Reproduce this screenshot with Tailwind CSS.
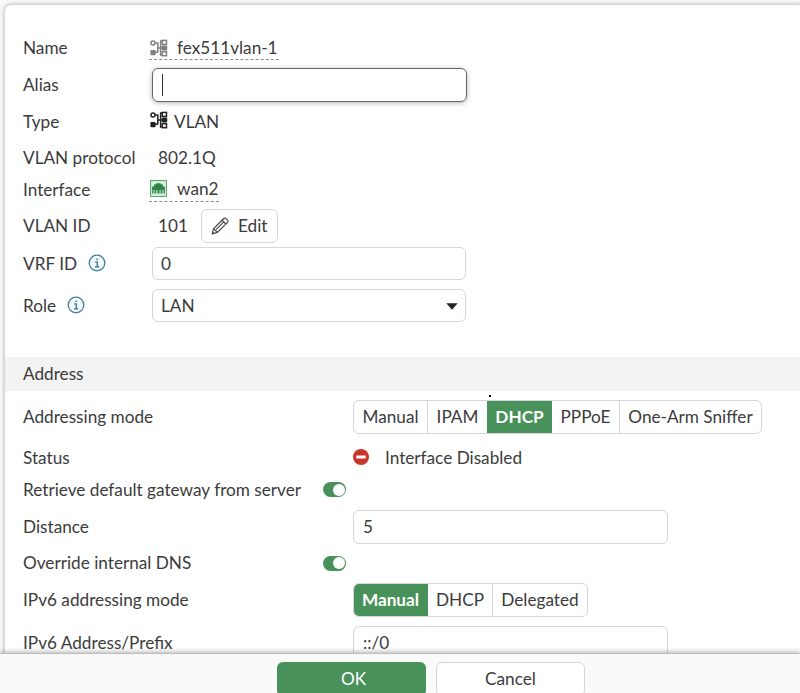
<!DOCTYPE html>
<html lang="en">
<head>
<meta charset="utf-8">
<title>Edit Interface</title>
<script src="https://cdn.jsdelivr.net/npm/@tailwindcss/browser@4"></script>
</head>
<body class="h-[693px] w-[800px] overflow-hidden bg-[#fafafa] font-['Lato',sans-serif] text-[17.2px] leading-6 text-[#3b3b3b]">
<svg class="hidden">
  <symbol id="vlan" viewBox="0 0 18 18">
    <g fill="none" stroke="currentColor" stroke-width="1.5">
      <circle cx="3" cy="4" r="2"/>
      <path d="M5.2 4H7.8V13.2M5 13.2H8M8 9H12M12.5 2H10.6V16H12.5"/>
      <rect x="12.3" y="1.4" width="4.2" height="4"/>
      <rect x="12.3" y="12.7" width="4.2" height="4"/>
    </g>
    <rect x=".4" y="11" width="5.2" height="5.2" rx="1" fill="currentColor"/>
    <rect x="11.8" y="6.6" width="5.4" height="4.8" rx="1" fill="currentColor"/>
  </symbol>
  <symbol id="info" viewBox="0 0 18 18">
    <circle cx="9" cy="9" r="7.8" fill="#f3fafd" stroke="#477f9d" stroke-width="1.3"/>
    <path d="M8.2 5.2H9.8M7.2 8H9.3V12.6M7 12.8H11.2" fill="none" stroke="#477f9d" stroke-width="1.4"/>
  </symbol>
</svg>
<div class="flex h-full flex-col">
  <main class="mt-[5px] ml-[5px] h-[648px] shrink-0 overflow-hidden rounded-tl-md bg-white pt-[25px] shadow-[0_0_4px_1px_rgba(0,0,0,0.25)]">
    <div class="flex h-9 items-center pl-[18px]"><div class="w-[126px]">Name</div>
      <div class="flex h-6 w-[130px] items-center border-b border-dashed border-[#8c8c8c] whitespace-nowrap"><svg class="ml-[1px] size-[18px] text-[#808080]"><use href="#vlan"/></svg><span class="ml-[9px]">fex511vlan-1</span></div></div>
    <div class="flex h-[38px] items-center pl-[18px]"><div class="w-[129px]">Alias</div>
      <div class="flex h-[34px] w-[315px] items-center rounded-md border border-[#666] px-[9px] shadow-[0_1px_5px_rgba(0,0,0,0.3)]"><span class="h-[22px] w-px bg-[#333]"></span></div></div>
    <div class="flex h-9 items-center pl-[18px]"><div class="w-[127px]">Type</div><svg class="-mt-1 size-[18px] text-[#222]"><use href="#vlan"/></svg><span class="ml-[6px]">VLAN</span></div>
    <div class="flex h-[35px] items-center pl-[18px]"><div class="w-[135px]">VLAN protocol</div><span>802.1Q</span></div>
    <div class="flex h-[29px] items-center pl-[18px]"><div class="w-[126px]">Interface</div>
      <div class="flex h-6 w-[70px] items-center border-b border-dashed border-[#8c8c8c]"><svg class="-mt-[2px] ml-[1px] size-[17px]" viewBox="0 0 16 16"><rect x=".5" y=".5" width="15" height="15" fill="#d9eede" stroke="#5cab70"/><path d="M2 12.6V6H4V4H6V3H10V4H12V6H14V12.6H12.7V9.5H11.7V12.6H10V9.5H9V12.6H7V9.5H6V12.6H4.3V9.5H3.3V12.6Z" fill="#2f8547"/></svg><span class="ml-[10px]">wan2</span></div></div>
    <div class="flex h-11 items-center pl-[18px]"><div class="w-[135px]">VLAN ID</div><span class="w-[43px]">101</span>
      <button class="flex h-[34px] w-[77px] items-center rounded-md border border-[#d6d6d6] pl-[9px]"><svg class="size-[18px]" viewBox="0 0 18 18" fill="none" stroke="#444" stroke-width="1.2" stroke-linejoin="round"><path d="M1.2 16.8L2.6 11.6L12.7 1.5Q14 .5 15.3 1.8L16.2 2.7Q17.5 4 16.5 5.3L6.4 15.4ZM2.6 11.6L6.4 15.4M11 3.2L14.8 7M12.3 5.3L5 12.6M1.6 15.2L2.8 16.4"/></svg><span class="ml-[9px]">Edit</span></button></div>
    <div class="flex h-[31px] items-center pl-[18px]"><div class="flex w-[129px] items-center">VRF ID<svg class="-mt-px ml-[11px] size-[18px]"><use href="#info"/></svg></div>
      <div class="flex h-[33px] w-[314px] items-center rounded-md border border-[#d6d6d6] px-2">0</div></div>
    <div class="flex h-[53px] items-center pl-[18px]"><div class="flex w-[129px] items-center">Role<svg class="-mt-[2px] ml-[11px] size-[18px]"><use href="#info"/></svg></div>
      <div class="flex h-[33px] w-[314px] items-center justify-between rounded-md border border-[#d6d6d6] pr-[7px] pl-2">LAN<svg class="mt-[2px] h-[7px] w-3" viewBox="0 0 12 7"><path d="M.3.3H11.7L6 6.8Z" fill="#222"/></svg></div></div>
    <h2 class="mt-[25px] flex h-[34px] items-center bg-[#f3f3f3] pl-[18px]">Address</h2>
    <div class="relative flex h-[51px] items-center pl-[18px]"><span class="absolute top-1 left-[484px] size-[1.5px] bg-black"></span><div class="w-[330px]">Addressing mode</div>
      <div class="flex h-[34px] w-[409px] overflow-hidden rounded-md border border-[#d6d6d6] *:flex *:items-center *:justify-center"><span class="w-[74px] border-r border-[#d6d6d6]">Manual</span><span class="w-[59px]">IPAM</span><span class="-my-px w-[65px] bg-[#48915a] font-bold text-white">DHCP</span><span class="w-[68px] border-r border-[#d6d6d6]">PPPoE</span><span class="flex-1">One-Arm Sniffer</span></div></div>
    <div class="flex h-[31px] items-center pl-[18px]"><div class="w-[330px]">Status</div><svg class="-mt-px size-4" viewBox="0 0 16 16"><circle cx="8" cy="8" r="8" fill="#c9352c"/><rect x="3.3" y="6.6" width="9.4" height="2.8" rx=".5" fill="#fff"/></svg><span class="ml-4">Interface Disabled</span></div>
    <div class="flex h-[33px] items-center pl-[18px]"><div class="w-[300px] whitespace-nowrap">Retrieve default gateway from server</div><span class="flex h-[15px] w-[23px] items-center justify-end rounded-full bg-[#48915a] pr-px"><i class="size-[12px] rounded-full bg-white"></i></span></div>
    <div class="flex h-[41px] items-center pl-[18px]"><div class="w-[330px]">Distance</div><div class="flex h-[34px] w-[315px] items-center rounded-md border border-[#d6d6d6] px-[9px]">5</div></div>
    <div class="flex h-8 items-center pl-[18px]"><div class="w-[300px]">Override internal DNS</div><span class="flex h-[15px] w-[23px] items-center justify-end rounded-full bg-[#48915a] pr-px"><i class="size-[12px] rounded-full bg-white"></i></span></div>
    <div class="flex h-[42px] items-center pl-[18px]"><div class="w-[330px]">IPv6 addressing mode</div>
      <div class="flex h-[34px] w-[235px] overflow-hidden rounded-md border border-[#d6d6d6] *:flex *:items-center *:justify-center"><span class="-my-px -ml-px w-[75px] bg-[#48915a] font-bold text-white">Manual</span><span class="w-[65px] border-r border-[#d6d6d6]">DHCP</span><span class="flex-1">Delegated</span></div></div>
    <div class="flex h-[43px] items-center pl-[18px]"><div class="w-[330px]">IPv6 Address/Prefix</div><div class="flex h-[34px] w-[315px] items-center rounded-md border border-[#d6d6d6] px-[9px]">::/0</div></div>
  </main>
  <footer class="relative flex h-10 shrink-0 gap-[10px] border-t border-[#bdbdbd] bg-[#fafafa] pt-2 pl-[277px] shadow-[0_-1px_5px_rgba(0,0,0,0.3)]">
    <button class="h-[34px] w-[149px] shrink-0 rounded-md bg-[#48915a] pl-1 text-white">OK</button>
    <button class="h-[34px] w-[149px] shrink-0 rounded-md border border-[#d6d6d6] bg-white">Cancel</button>
  </footer>
</div>
</body>
</html>
